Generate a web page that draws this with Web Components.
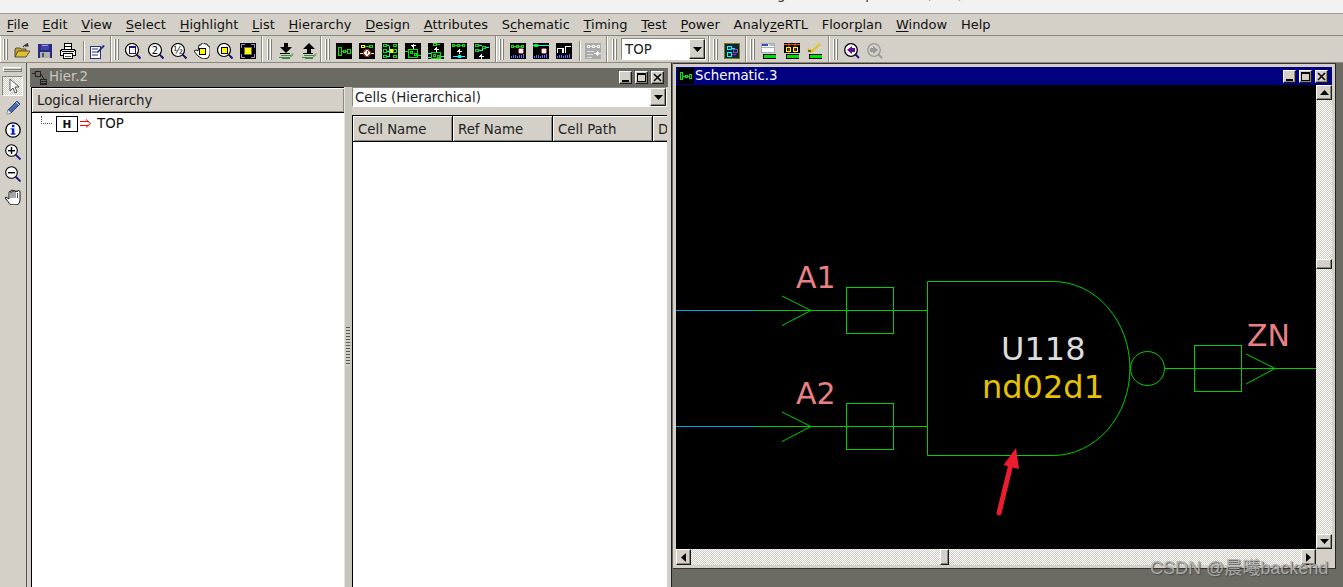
<!DOCTYPE html>
<html lang="en"><head><meta charset="utf-8"><title>Design Vision</title>
<style>
html,body{margin:0;padding:0;height:587px;overflow:hidden;background:#d4d0c8;font:13.33px "DejaVu Sans",sans-serif;color:#111}
</style></head>
<body>
<app-shell>
  <title-strip>Design Vision - TopLevel.1 (TOP)</title-strip>
  <menu-bar>
    <menu-item key="F" >File</menu-item><menu-item key="E">Edit</menu-item><menu-item key="V">View</menu-item><menu-item key="S">Select</menu-item><menu-item key="H">Highlight</menu-item><menu-item key="L">List</menu-item><menu-item key="H">Hierarchy</menu-item><menu-item key="D">Design</menu-item><menu-item key="A">Attributes</menu-item><menu-item key="c">Schematic</menu-item><menu-item key="T">Timing</menu-item><menu-item key="T">Test</menu-item><menu-item key="P">Power</menu-item><menu-item key="z">AnalyzeRTL</menu-item><menu-item key="p">Floorplan</menu-item><menu-item key="W">Window</menu-item><menu-item>Help</menu-item>
  </menu-bar>
  <tool-bar>
    <tool-group w="111" pad="3"><tool-handle></tool-handle><tool-icon name="open"></tool-icon><tool-icon name="save"></tool-icon><tool-icon name="print"></tool-icon><tool-sep></tool-sep><tool-icon name="props"></tool-icon></tool-group>
    <tool-group w="151" pad="3"><tool-handle></tool-handle><tool-icon name="zbox"></tool-icon><tool-icon name="z2"></tool-icon><tool-icon name="zhalf"></tool-icon><tool-icon name="zhand"></tool-icon><tool-icon name="zsel"></tool-icon><tool-icon name="fit"></tool-icon></tool-group>
    <tool-group w="59" pad="5"><tool-handle></tool-handle><tool-icon name="pushd"></tool-icon><tool-icon name="popu"></tool-icon></tool-group>
    <tool-group w="175" pad="4"><tool-handle></tool-handle><tool-icon name="s1"></tool-icon><tool-icon name="s2"></tool-icon><tool-icon name="s3"></tool-icon><tool-icon name="s4"></tool-icon><tool-icon name="s5"></tool-icon><tool-icon name="s6"></tool-icon><tool-icon name="s7"></tool-icon></tool-group>
    <tool-group w="111" pad="3"><tool-handle></tool-handle><tool-icon name="t1"></tool-icon><tool-icon name="t2"></tool-icon><tool-icon name="t3"></tool-icon><tool-sep></tool-sep><tool-icon name="t4"></tool-icon></tool-group>
    <tool-group w="102" pad="5"><tool-handle></tool-handle><combo-box w="85" h="22" style="margin-left:-2px;padding-left:1px">TOP</combo-box></tool-group>
    <tool-group w="37" pad="4"><tool-handle></tool-handle><tool-icon name="layout"></tool-icon></tool-group>
    <tool-group w="83" pad="4"><tool-handle></tool-handle><tool-icon name="u1"></tool-icon><tool-icon name="u2"></tool-icon><tool-icon name="u3"></tool-icon></tool-group>
    <tool-group pad="4" last><tool-handle></tool-handle><tool-icon name="back"></tool-icon><tool-icon name="fwd"></tool-icon></tool-group>
  </tool-bar>
  <work-area>
    <tool-palette>
      <palette-handle></palette-handle>
      <palette-select><tool-icon name="arrow"></tool-icon></palette-select>
      <tool-icon name="pencil" style="margin-top:6px"></tool-icon>
      <tool-icon name="info" style="margin-top:7px"></tool-icon>
      <tool-icon name="zin" style="margin-top:6px"></tool-icon>
      <tool-icon name="zout" style="margin-top:6px"></tool-icon>
      <tool-icon name="hand" style="margin-top:7px"></tool-icon>
    </tool-palette>
    <mdi-desktop>
      <mdi-window x="0" y="0" w="645" h="530" pt="5" title-h="19" bg="#6b6a63" fg="#c9c7c0">
        <tool-icon slot="icon" name="hier"></tool-icon>
        <span slot="title">Hier.2</span>
        <hier-view>
          <pane-header slot="left">Logical Hierarchy</pane-header>
          <tree-row slot="left">TOP</tree-row>
          <combo-box slot="right" h="20" fill>Cells (Hierarchical)</combo-box>
          <data-table slot="right">
            <col-head>Cell Name</col-head><col-head>Ref Name</col-head><col-head>Cell Path</col-head><col-head>Design</col-head>
          </data-table>
        </hier-view>
      </mdi-window>
      <mdi-window x="646" y="0" w="663" h="506" pt="3" title-h="18" bg="#000080" fg="#fff" framed>
        <tool-icon slot="icon" name="sch"></tool-icon>
        <span slot="title">Schematic.3</span>
        <schematic-view></schematic-view>
      </mdi-window>
    </mdi-desktop>
  </work-area>
  <water-mark>CSDN @晨曦backend</water-mark>
</app-shell>
<script>
const bevel='border:1px solid;border-color:#fff #1a1a1a #1a1a1a #fff;box-shadow:inset -1px -1px 0 #8a887f;box-sizing:border-box;background:#d4d0c8;';
const dither='background:repeating-conic-gradient(#cfccc4 0 25%,#fff 0 50%) 0 0/2px 2px;';
function def(name,css,html,init){
  customElements.define(name,class extends HTMLElement{
    constructor(){super();this.attachShadow({mode:'open'}).innerHTML='<style>'+css+'</style>'+(typeof html==='function'?html(this):html);}
    connectedCallback(){if(init)init(this);}
  });
}
/* ---------- icon primitives ---------- */
const R=(x,y,w,h,c)=>`<rect x="${x+.5}" y="${y+.5}" width="${w-1}" height="${h-1}" fill="none" stroke="${c}"/>`;
const F=(x,y,w,h,c)=>`<rect x="${x}" y="${y}" width="${w}" height="${h}" fill="${c}"/>`;
const L=(a,b,c,d,s,w=1)=>`<line x1="${a}" y1="${b}" x2="${c}" y2="${d}" stroke="${s}" stroke-width="${w}"/>`;
const K=F(0,0,16,16,'#000');
const G='#00e800',C='#00ffff',Y='#ffff00',W='#fff';
const plus=(x,y)=>F(x-2,y-.5,5,1,W)+F(x-.5,y-2,1,5,W)+F(x-1,y-1,2,2,W);
const Z=(inner)=>`<circle cx="7" cy="7" r="6.5" fill="#fff" stroke="#000" stroke-width="1.2"/>`+L(11.5,11.5,15,15,'#000',1.4)+L(13,13,15.5,15.5,'#20108a',2)+inner;
const bars=F(1,13,1,2,'#5a70ff')+F(3,12,1,3,'#5a70ff')+F(5,12,1,3,'#5a70ff')+F(7,13,1,2,'#5a70ff')+F(9,12,1,3,'#5a70ff')+F(11,12,1,3,'#5a70ff')+F(13,11,1,4,'#5a70ff');
const clock=`<circle cx="11" cy="8" r="2.6" fill="#fff" stroke="#c33" stroke-width="1"/>`;
const pill=F(2,11,13,5,'#000')+F(3,12,12,3,'#00e000');
const ICONS={
 open:`<path d="M1 14V6l1-1h4l1 1h5v2" fill="#c8a820" stroke="#333" stroke-width=".8"/><path d="M1 14l3-6h12l-4 6z" fill="#e0c030" stroke="#333" stroke-width=".8"/><path d="M9 4q2-3 4-2M13 0l1 3-3 0" fill="none" stroke="#222" stroke-width="1.100"/>`,
 save:F(1,1,14,14,'#2a2a80')+F(4,1,8,6,'#4444a8')+F(5,2,6,1,'#9a9ad0')+F(3,9,10,6,'#b0b0b0')+F(5,10,2,4,'#555'),
 print:`<path d="M4.500 .5h7v6h-7z" fill="#fff" stroke="#000"/><path d="M1.500 6.500h13l1 2v4h-15v-4z" fill="#eee" stroke="#000"/><path d="M3.500 10.500h9v5h-9z" fill="#fff" stroke="#000"/>`+L(5,3.5,11,3.5,'#000')+L(2,8.5,14,8.500,'#000')+L(5,13.5,11,13.5,'#555'),
 props:F(1,3,11,13,'#fff')+R(1,3,11,13,'#203080')+L(3,6,9,6,'#203080')+L(3,9,9,9,'#203080')+L(3,12,9,12,'#203080')+`<path d="M8 9l6-7 2 1-7 7z" fill="#203080"/>`,
 zbox:Z(R(4,3,7,8,'#20108a')+F(4,3,7,2,'#20108a')),
 z2:Z(`<text x="7" y="10.5" font-family="DejaVu Sans" font-size="10" text-anchor="middle" fill="#000">2</text>`),
 zhalf:Z(`<text x="7" y="10.5" font-family="DejaVu Sans" font-size="10" text-anchor="middle" fill="#000">½</text>`),
 zhand:`<path d="M0 8l2-1 2 1 1-6 2 0 1-2 2 0 1 1 2 0 1 2 2 1 0 7-2 4-5 1-5-3z" fill="#fff" stroke="#000" stroke-width=".9"/>`+R(5,5,7,7,'#000')+F(6,6,5,5,Y),
 zsel:Z(R(4,4,7,7,'#000')+F(5,5,5,5,Y)),
 fit:K+F(5,5,6,6,Y)+R(4,4,8,8,'#666')+`<path d="M1.500 5V1.500H5M11 1.500h3.500V5M14.500 11v3.500H11M5 14.500H1.500V11" fill="none" stroke="#a080d0"/>`,
 pushd:`<path d="M6 0h4v4h4l-6 6-6-6h4z" fill="#000"/>`+L(2,10.5,12,10.5,'#000',1)+`<path d="M3 12.500h10l2-2M1 14.500h11l3-3M4 15.500h8" fill="none" stroke="#3a8a3a"/>`,
 popu:`<path d="M8 0l6 6h-4v4H6V6H2z" fill="#000"/>`+L(2,10.5,12,10.5,'#000',1)+`<path d="M3 12.500h10l2-2M1 14.500h11l3-3M4 15.500h8" fill="none" stroke="#3a8a3a"/>`,
 s1:K+R(2,4,4,9,G)+L(6,8.5,7,8.5,G)+R(7,7,3,3,G)+L(10,8.5,11,8.5,G)+R(11,6,4,5,G),
 s2:K+R(2,2,4,3,Y)+L(6,3.5,10,3.5,G)+R(10,2,4,3,G)+F(1,10,3,1,Y)+F(12,10,3,1,Y)+`<circle cx="8" cy="10" r="3.3" fill="#fff" stroke="#b03020"/>`+F(7.5,8,1,3,'#b03020'),
 s3:K+R(1,1,4,3,G)+R(1,6,4,4,G)+R(1,12,4,3,G)+L(5,2.5,7,2.5,C)+L(5,8,11,8,C)+L(5,13.5,7,13.5,C)+L(7,2.5,7,13.5,C)+F(8,6,3,4,Y)+R(11,1,4,3,G)+R(11,6,4,4,G)+R(11,12,4,3,G),
 s4:K+plus(8,2.5)+R(3,6,10,9,G)+R(5,8,3,3,G)+R(9,10,3,3,G)+L(0,8.5,3,8.5,G)+L(13,12.5,16,12.5,G),
 s5:K+R(5,0,4,3,G)+L(9,1.5,12,1.5,G)+plus(8,6)+R(3,9,10,7,G)+R(5,11,3,3,G)+R(9,12,3,3,G)+L(0,10.5,3,10.5,C)+L(13,13.5,16,13.5,C)+L(0,14.5,3,14.5,C),
 s6:K+R(1,1,3,3,G)+L(4,2.5,6,2.5,G)+R(6,1,3,3,G)+L(9,2.5,11,2.5,G)+R(11,1,3,3,G)+plus(8,8)+L(2,13.5,14,13.5,C)+R(7,12,3,3,C),
 s7:K+R(1,1,4,3,G)+R(1,6,4,3,G)+L(5,2.5,8,2.5,C)+L(5,7.5,8,7.5,C)+L(8,2.5,8,7.5,C)+R(8,3,4,3,G)+L(12,4.5,15,4.5,C)+plus(7,13),
 t1:K+bars+R(1,2,3,3,G)+L(4,3.5,6,3.5,G)+R(6,2,3,3,G)+L(9,3.5,11,3.5,G)+R(11,2,3,3,G)+clock,
 t2:K+bars+L(0,2.5,16,2.5,C)+R(1,1,4,3,G)+clock,
 t3:K+bars+`<path d="M1 9.500V5.500h5v4M6 5.500h1V9.500M9 9.500V3.500h6" fill="none" stroke="#fff"/>`,
 t4:F(0,0,16,16,'#aaa')+R(2,2,3,3,'#eee')+L(5,3.5,7,3.5,'#eee')+R(7,2,3,3,'#eee')+L(10,3.5,12,3.5,'#eee')+R(12,2,3,3,'#eee')+L(2,8.5,9,8.5,'#ddd')+L(2,11.5,8,11.5,'#ddd')+L(2,14.5,7,14.5,'#ddd')+F(11,9,3,3,'#eee')+F(9,10,7,1,'#eee')+F(12,8,1,5,'#eee'),
 layout:F(0,0,16,16,'#7a7a10')+F(1,1,14,14,'#082838')+R(3,3,5,4,C)+R(9,6,5,4,'#a040c0')+R(3,9,5,5,C)+L(8,5,11,5,C)+L(8,11,12,11,'#a040c0'),
 u1:F(0,0,14,10,'#fff')+R(0,0,14,10,'#aab')+F(1,1,6,2,'#3050c0')+F(8,1,5,2,'#bbb')+L(1,4.5,13,4.5,'#aab')+pill,
 u2:F(0,0,16,10,'#000')+L(0,1.5,16,1.5,'#e05020')+L(5,0,5,10,'#e05020')+L(11,0,11,10,'#e05020')+R(2,4,5,5,Y)+R(9,4,5,5,Y)+pill,
 u3:`<path d="M1 6l3 3 9-8" fill="none" stroke="#e8c000" stroke-width="2"/>`+L(1,8,4,8,'#000')+pill,
 back:`<circle cx="7" cy="7" r="6.300" fill="#fff" stroke="#000" stroke-width="1.300"/>`+L(11.5,11.5,15,15,'#20108a',2)+`<path d="M3 7l5-4v2h3v4H8v2z" fill="#5a1090"/>`,
 fwd:`<circle cx="7" cy="7" r="6.300" fill="#d4d0c8" stroke="#999" stroke-width="1.300"/>`+L(11.5,11.5,15,15,'#999',2)+`<path d="M11 7L6 3v2H3v4h3v2z" fill="#999"/>`,
 arrow:`<path d="M5 1v12l3-3 2 5 2-1-2-5h4z" fill="#fff" stroke="#555" stroke-width="1"/>`,
 pencil:`<path d="M2 15l1-4 9-9 3 3-9 9z" fill="#4a6ab0" stroke="#203060" stroke-width=".8"/><path d="M2 15l1-4 3 3z" fill="#eed"/><path d="M11 3l3 3" stroke="#ccc"/>`,
 info:`<circle cx="8" cy="8" r="7.200" fill="#fff" stroke="#000" stroke-width="1.300"/>`+F(6.8,2.8,2.6,2.4,'#0028c8')+F(6.8,6.4,2.6,6,'#0028c8')+F(5.6,6.4,2,1,'#0028c8')+F(5.6,11.4,5,1.2,'#0028c8'),
 zin:`<circle cx="6.500" cy="6.500" r="5.800" fill="#fff" stroke="#000" stroke-width="1.100"/>`+F(3,6,7,1.4,'#000')+F(5.8,3,1.4,7,'#000')+L(10.5,10.5,15.5,15.5,'#20108a',1.8),
 zout:`<circle cx="6.500" cy="6.500" r="5.800" fill="#fff" stroke="#000" stroke-width="1.100"/>`+F(3,6,7,1.4,'#000')+L(10.5,10.5,15.5,15.5,'#20108a',1.8),
 hand:`<path d="M0 9l1-1 3 2V3.500a1 1 0 0 1 2 0V2a1 1 0 0 1 2 0v.5a1 1 0 0 1 2 0V3a1 1 0 0 1 2 0 1 1 0 0 1 3 0V11q0 4-3 4.800H6Q4 15 3 12.500z" fill="#fff" stroke="#000" stroke-width=".9"/><path d="M6 3v6M8 2v7M10 3v6M12.500 4v5" stroke="#000" stroke-width=".7"/>`,
 hier:R(3,1,6,6,'#222')+L(0,3.5,3,3.5,'#222')+L(9,4,12,9,'#222')+R(8,9,7,6,'#222')+F(9,11,5,1,'#222')+F(9,13,5,1,'#222'),
 sch:K+R(2,4,3,8,G)+L(5,8.5,7,8.5,G)+R(7,7,3,3,G)+L(10,8.5,11,8.5,G)+R(11,6,3,5,G)
};
def('tool-icon',':host{display:block;width:16px;height:16px;flex:none}svg{display:block}',
  h=>`<svg width="16" height="16" viewBox="0 0 16 16" shape-rendering="${/^(s\d|t\d|sch|layout|fit|save|print)$/.test(h.getAttribute('name'))?'crispEdges':'auto'}">${ICONS[h.getAttribute('name')]||''}</svg>`);
/* ---------- shell ---------- */
def('app-shell',':host{display:flex;flex-direction:column;width:1343px;height:587px;overflow:hidden;position:relative}','<slot></slot>');
def('title-strip',':host{display:block;flex:none;height:13px;background:#f2f2f2;overflow:hidden;color:#333;white-space:nowrap}div{margin:-15px 0 0 748px;font-size:13.33px;line-height:19px}','<div><slot></slot></div>');
def('menu-bar',':host{display:flex;flex:none;height:22px;box-sizing:border-box;background:#d4d0c8;border-top:1px solid #9c9a92;align-items:center;white-space:nowrap;font-size:13px}','<slot></slot>');
def('menu-item',':host{display:block;padding:0 6.87px;line-height:20px;color:#111}u{text-underline-offset:2px}',h=>{
  const k=h.getAttribute('key'),t=h.textContent;if(!k)return t;
  const i=t.indexOf(k);return t.slice(0,i)+'<u>'+k+'</u>'+t.slice(i+1);});
def('tool-bar',':host{display:flex;flex:none;height:28px;box-sizing:border-box;background:#d4d0c8;border-top:1px solid #8a887f;border-bottom:1px solid #8a887f}','<slot></slot>');
def('tool-group',':host{display:flex;align-items:center;gap:7px;box-sizing:border-box;flex:none;border-left:1px solid #fff;border-right:1px solid #8a887f;height:26px}:host([last]){border-right:0;flex:1}::slotted(tool-icon){margin-top:3px}',
  '<slot></slot>',h=>{if(h.hasAttribute('w'))h.style.width=h.getAttribute('w')+'px';h.style.paddingLeft=(h.getAttribute('pad')-1)+'px';});
def('tool-handle',':host{display:flex;gap:1px;flex:none;height:21px;margin-right:-1px}i{display:block;width:2px;height:100%;border-left:1px solid #fff;border-right:1px solid #807e76;box-sizing:border-box}','<i></i><i></i>');
def('tool-sep',':host{display:block;flex:none;width:2px;height:20px;box-sizing:border-box;border-left:1px solid #8a887f;border-right:1px solid #fff;margin:3px -3px 0 0}','');
def('combo-box',':host{display:flex;flex:none;box-sizing:border-box;background:#fff;border:1px solid;border-color:#8a887f #fff #fff #8a887f;align-items:center;color:#222}:host([fill]){align-self:stretch}.t{flex:1;padding:2px 0 0 2px;line-height:18px;white-space:nowrap;overflow:hidden}.b{flex:none;width:16px;align-self:stretch;'+bevel+'display:flex;align-items:center;justify-content:center}.b svg{display:block}',
  '<div class="t"><slot></slot></div><div class="b"><svg width="9" height="5" viewBox="0 0 9 5"><path d="M0 0h9L4.500 5z" fill="#000"/></svg></div>',
  h=>{if(h.hasAttribute('w'))h.style.width=h.getAttribute('w')+'px';h.style.height=h.getAttribute('h')+'px';});
def('work-area',':host{display:flex;flex:1;min-height:0}','<slot></slot>');
def('tool-palette',':host{display:flex;flex-direction:column;align-items:center;flex:none;width:27px;box-sizing:border-box;background:#d4d0c8;border-right:1px solid #555;padding:4px 1px 0 0}','<slot></slot>');
def('palette-handle',':host{display:block;width:19px;height:5px;box-sizing:border-box;border:1px solid;border-color:#fff #807e76 #807e76 #fff;background:linear-gradient(#d4d0c8 0 1px,#807e76 1px 2px,#d4d0c8 2px)}','');
def('palette-select',':host{display:flex;align-items:center;justify-content:center;width:21px;height:20px;margin:4px 0 -3px;box-sizing:border-box;border:1px solid;border-color:#8a887f #fff #fff #8a887f;'+dither+'}','<slot></slot>');
def('mdi-desktop',':host{display:block;flex:1;position:relative;background:#6b6a63;overflow:hidden}','<slot></slot>');
def('mdi-window',`:host{position:absolute;display:flex;flex-direction:column;box-sizing:border-box;background:#d4d0c8;padding:0 3px 3px 3px;border-right:1px solid #222}
:host([framed]){border-top:1px solid #333;border-bottom:1px solid #333}
.tb{flex:none;display:flex;align-items:center;padding-right:4px;font-size:13.33px}
.ic{width:16px;height:16px;margin-left:2px;flex:none}.tx{flex:1;padding-left:1px;white-space:nowrap;margin-top:-2px}
.c{flex:1;min-height:0;display:flex;flex-direction:column}
win-btn{margin-left:3px}`,
 h=>`<div class="tb" style="height:${h.getAttribute('title-h')}px;background:${h.getAttribute('bg')};color:${h.getAttribute('fg')}"><span class="ic"><slot name="icon"></slot></span><span class="tx"><slot name="title"></slot></span><win-btn kind="min"></win-btn><win-btn kind="max"></win-btn><win-btn kind="close"></win-btn></div><div class="c"><slot></slot></div>`,
 h=>{const g=a=>h.getAttribute(a);Object.assign(h.style,{left:g('x')+'px',top:g('y')+'px',width:g('w')+'px',height:g('h')+'px',paddingTop:g('pt')+'px'});});
const GL={min:'<rect x="2" y="8" width="7" height="2" fill="#000"/>',max:'<rect x="1.500" y="1.500" width="8" height="8" fill="none" stroke="#000"/><rect x="1" y="1" width="9" height="2" fill="#000"/>',close:'<path d="M2 2l7 7M9 2L2 9" stroke="#000" stroke-width="1.600" fill="none"/>'};
def('win-btn',':host{display:block;flex:none;width:13px;height:13px;'+bevel+'}svg{display:block}',h=>`<svg width="11" height="11" viewBox="0 0 11 11">${GL[h.getAttribute('kind')]}</svg>`);
/* ---------- hierarchy ---------- */
def('hier-view',`:host{display:flex;flex:1;min-height:0;padding-left:1px}
.l{width:313px;flex:none;display:flex;flex-direction:column;background:#fff;border-left:1px solid #000;border-top:1px solid #000;box-sizing:border-box}
.s{width:8px;flex:none;background:linear-gradient(90deg,#e4e2dc 0 1px,#c8c5bd 1px);position:relative}
.s i{position:absolute;left:2px;top:240px;width:4px;height:39px;background:repeating-linear-gradient(#555 0 1px,#d4d0c8 1px 3px)}
.r{flex:1;min-width:0;display:flex;flex-direction:column;padding-right:1px}`,
`<div class="l"><slot name="left"></slot></div><div class="s"><i></i></div><div class="r"><slot name="right"></slot></div>`);
def('pane-header',':host{display:block;flex:none;height:25px;line-height:25px;padding-left:5px;box-sizing:border-box;background:#d4d0c8;border-bottom:1px solid #000;box-shadow:inset 1px 1px 0 #fff,inset -1px -1px 0 #8a887f;color:#222;white-space:nowrap}','<slot></slot>');
def('tree-row',`:host{display:flex;align-items:center;height:21px;color:#111}
.d{width:10px;height:7px;margin:-7px 0 0 9px;border-left:1px dotted #555;border-bottom:1px dotted #555;flex:none;align-self:center}
.h{width:22px;height:16px;box-sizing:border-box;border:1px solid #000;background:#fff;margin-left:4px;flex:none;font:bold 10.5px/14px "DejaVu Sans",sans-serif;text-align:center}
svg{margin:0 6px 0 2px;flex:none}`,
`<div class="d"></div><div class="h">H</div><svg width="11" height="9" viewBox="0 0 11 9"><path d="M0 2.500h9M0 6.500h9" fill="none" stroke="#f00" shape-rendering="crispEdges"/><path d="M6 .5l4.500 4-4.500 4" fill="none" stroke="#f00"/></svg><slot></slot>`);
def('data-table',':host{display:flex;flex-direction:column;flex:1;margin-top:8px;background:#fff;border-left:1px solid #000;border-top:1px solid #000;min-height:0;overflow:hidden}.h{display:flex;flex:none;height:26px;box-sizing:border-box;border-bottom:1px solid #000;background:#d4d0c8}','<div class="h"><slot></slot></div>');
def('col-head',':host{display:block;flex:none;width:100px;box-sizing:border-box;padding:2px 0 0 5px;line-height:24px;height:25px;background:#d4d0c8;border-right:1px solid #000;box-shadow:inset 1px 1px 0 #fff,inset -1px -1px 0 #8a887f;white-space:nowrap;overflow:hidden;color:#222}','<slot></slot>');
/* ---------- schematic ---------- */
def('scroll-bar',`:host{display:flex;flex:none;box-sizing:border-box}
:host([o=v]){flex-direction:column;width:16px}:host([o=h]){height:16px}
.b{flex:none;width:16px;height:16px;${bevel}display:flex;align-items:center;justify-content:center}
:host([o=v]) .b{height:15px}:host([o=h]) .b{width:15px}
.t{flex:1;${dither}display:flex;min-width:0;min-height:0}
:host([o=v]) .t{flex-direction:column}
.m{flex:none;width:9px;height:16px;${bevel}}:host([o=v]) .m{width:16px;height:10px}
svg{display:block}`,
h=>{const v=h.getAttribute('o')==='v',m=h.getAttribute('pos');
 const a=v?'M0 5L4.500 0 9 5z':'M5 0L0 4.500 5 9z',c=v?'M0 0L4.500 5 9 0z':'M0 0L5 4.500 0 9z',sz=v?'width="9" height="5" viewBox="0 0 9 5"':'width="5" height="9" viewBox="0 0 5 9"';
 return `<div class="b"><svg ${sz}><path d="${a}"/></svg></div><div class="t"><div class="m" style="margin-${v?'top':'left'}:${m}px"></div></div><div class="b"><svg ${sz}><path d="${c}"/></svg></div>`;});
def('schematic-view',`:host{display:grid;flex:1;grid-template-columns:640px 16px;grid-template-rows:464px 16px;min-height:0}
svg{display:block}svg.cv{background:#000}.corner{background:#d4d0c8}
text{font-family:"DejaVu Sans",sans-serif;font-size:30px}text.big{font-size:32px}`,
()=>{
 const G='#00d000',B='#00a8e0';
 const port=(y)=>`<path d="M676 ${y+.5}H755" stroke="${B}"/><path d="M755 ${y+.5}H927" stroke="${G}"/><path d="M782 ${y-14}L811 ${y+.5}L782 ${y+15.5}" fill="none" stroke="${G}" stroke-width="1"/><rect x="846.500" y="${y-22.5}" width="47" height="46" fill="none" stroke="${G}"/>`;
 return `<svg class="cv" width="640" height="464" viewBox="676 85 640 464">
 ${port(310)}${port(426)}
 <path d="M1053 281.500H927.500V455.500H1053A77 87 0 0 0 1053 281.500Z" fill="none" stroke="${G}"/>
 <circle cx="1147.500" cy="368.500" r="17" fill="none" stroke="${G}"/>
 <path d="M1164.500 368.500H1316" stroke="${G}"/>
 <rect x="1194.500" y="345.500" width="47" height="46" fill="none" stroke="${G}"/>
 <path d="M1246 354L1275 368.500L1246 384" fill="none" stroke="${G}"/>
 <text x="796" y="288" fill="#e88184">A1</text>
 <text x="796" y="404" fill="#e88184">A2</text>
 <text x="1247" y="346" fill="#e88184">ZN</text>
 <text class="big" x="1001" y="360" fill="#dcdcdc">U118</text>
 <text class="big" x="982" y="398" fill="#e6c200">nd02d1</text>
 <path d="M999 513L1011 464" stroke="#ee1c30" stroke-width="5" stroke-linecap="round" fill="none"/>
 <path d="M1016 448L1003.500 465L1019 469Z" fill="#ee1c30"/>
 </svg><scroll-bar o="v" pos="159"></scroll-bar><scroll-bar o="h" pos="249"></scroll-bar><div class="corner"></div>`;});
def('water-mark',':host{position:absolute;left:1150px;top:558px;font:18px/20px "Liberation Sans","Noto Sans CJK SC",sans-serif;color:#b0b0ae;text-shadow:1px 1px 1px #4a4a4a;white-space:nowrap;opacity:.9}','<slot></slot>');
</script>
</body></html>
